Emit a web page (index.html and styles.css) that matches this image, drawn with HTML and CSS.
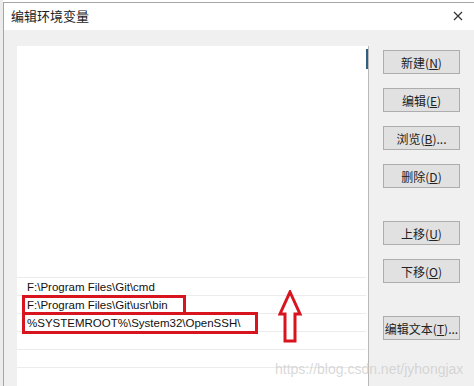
FILE: index.html
```html
<!DOCTYPE html>
<html lang="zh-CN">
<head>
    <meta charset="UTF-8">
    <meta name="viewport" content="width=device-width, initial-scale=1.0">
    <title>编辑环境变量</title>
    <link rel="stylesheet" href="styles.css">
</head>
<body>
    <div class="screen">
        <div class="behind"></div>
        <div class="window">
            <div class="titlebar">
                <span class="title">编辑环境变量</span>
                <span class="close">
                    <svg width="10" height="10" viewBox="0 0 10 10">
                        <path d="M1 1 L9 9 M9 1 L1 9" stroke="#333" stroke-width="1.2" fill="none"/>
                    </svg>
                </span>
            </div>
            <div class="content">
                <div class="list">
                    <div class="rows">
                        <div class="row">F:\Program Files\Git\cmd</div>
                        <div class="row"><span class="mark">F:\Program Files\Git\usr\bin</span></div>
                        <div class="row"><span class="mark wide">%SYSTEMROOT%\System32\OpenSSH\</span></div>
                        <div class="row"></div>
                        <div class="row"></div>
                        <div class="row"></div>
                    </div>
                    <div class="scrolltrack"><div class="thumb"></div></div>
                </div>
                <div class="buttons">
                    <button class="btn">新建(<u>N</u>)</button>
                    <button class="btn">编辑(<u>E</u>)</button>
                    <button class="btn">浏览(<u>B</u>)...</button>
                    <button class="btn">删除(<u>D</u>)</button>
                    <button class="btn group">上移(<u>U</u>)</button>
                    <button class="btn">下移(<u>O</u>)</button>
                    <button class="btn group">编辑文本(<u>T</u>)...</button>
                </div>
            </div>
        </div>

        <!-- 标注箭头 -->
        <svg class="arrow" width="26" height="56" viewBox="0 0 26 56">
            <polygon points="12,2 22,24 17,24 17,51 7,51 7,24 2,24" fill="#fff" stroke="#d8141e" stroke-width="3" stroke-linejoin="miter"/>
        </svg>
        <div class="watermark">https://blog.csdn.net/jyhongjax</div>
    </div>
</body>
</html>
```

FILE: styles.css
```css
* {
    box-sizing: border-box;
}
body {
    margin: 0;
    font-family: "Liberation Sans", "Noto Sans CJK SC", sans-serif;
    background-color: #fff;
}
.screen {
    position: relative;
    display: flex;
    width: 474px;
    height: 386px;
    overflow: hidden;
}
.behind {
    width: 3px;
    background-color: #ececec;
}
.window {
    flex: 1;
    margin-top: 2px;
    border-top: 1px solid #a5a5a5;
    border-left: 1px solid #a5a5a5;
    display: flex;
    flex-direction: column;
}
.titlebar {
    height: 27px;
    background-color: #fff;
    display: flex;
    align-items: center;
    justify-content: space-between;
    padding: 0 11px 2px 7px;
}
.title {
    font-family: "Noto Sans CJK SC", sans-serif;
    font-size: 13px;
    color: #222;
}
.close {
    display: flex;
}
.content {
    flex: 1;
    background-color: #f0f0f0;
    display: flex;
    padding: 16px 0 0 13px;
}
.list {
    width: 352px;
    background-color: #fff;
    display: flex;
}
.rows {
    flex: 1;
    padding-top: 231px;
}
.row {
    height: 18px;
    line-height: 18px;
    padding-left: 10px;
    font-size: 11.5px;
    color: #111;
    border-top: 1px solid #ececec;
    white-space: nowrap;
}
.mark {
    display: inline-block;
    line-height: 14px;
    margin-left: -2px;
    padding: 0 15px 0 2px;
    outline: 3px solid #d8141e;
}
.mark.wide {
    line-height: 16px;
}
.scrolltrack {
    width: 3px;
    border-right: 1px solid #b8b8b8;
}
.thumb {
    margin-top: 3px;
    height: 20px;
    width: 2px;
    background-color: #2f5f80;
}
.buttons {
    margin-left: 14px;
    padding-top: 4px;
    display: flex;
    flex-direction: column;
    gap: 14px;
}
.btn {
    width: 77px;
    height: 24px;
    padding: 0;
    background-color: #e1e1e1;
    border: 1px solid #adadad;
    font-family: "Noto Sans CJK SC", sans-serif;
    font-size: 12px;
    color: #222;
}
.btn.group {
    margin-top: 19px;
}
.arrow {
    position: absolute;
    left: 278px;
    top: 290px;
}
.watermark {
    position: absolute;
    left: 275px;
    top: 361px;
    font-size: 14px;
    color: rgba(200, 200, 200, 0.7);
    white-space: nowrap;
}
```
